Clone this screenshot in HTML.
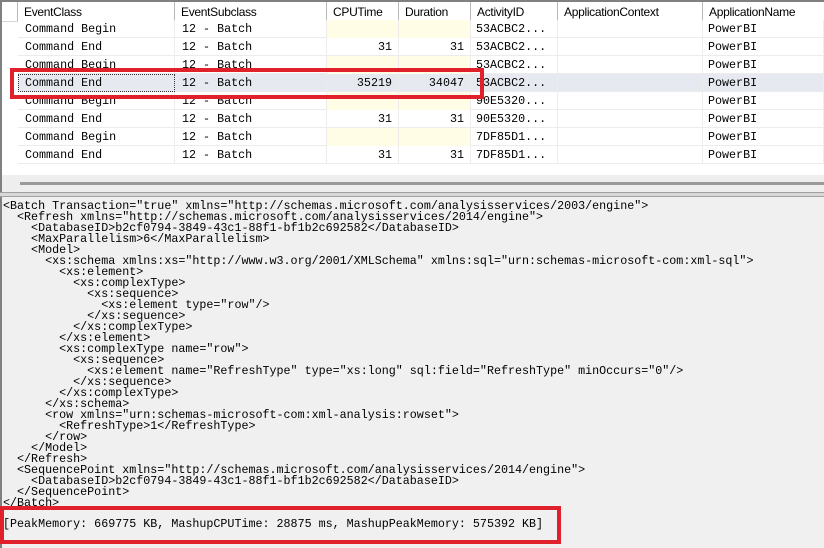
<!DOCTYPE html>
<html><head><style>
*{margin:0;padding:0;box-sizing:border-box}
body{width:824px;height:548px;background:#f0f0f0;position:relative;overflow:hidden;font-family:"Liberation Mono",monospace;font-size:11.7px;color:#000}
.abs{position:absolute}
.hc{position:absolute;top:2px;height:19px;border-right:1px solid #b8b8b8;font-family:"Liberation Sans",sans-serif;font-size:12px;padding:3px 0 0 6px;background:#fff;letter-spacing:-0.3px}
.row{position:absolute;left:18px;width:806px;height:18px;border-bottom:1px solid #ececec;background:#fff}
.c{position:absolute;top:0;height:18px;line-height:19px;border-right:1px solid #ececec;white-space:pre}
.y{background:#fffde6}
.r{text-align:right;padding-right:6px}
pre{font-family:"Liberation Mono",monospace;font-size:11.7px;line-height:11px;white-space:pre}
</style></head><body>
<div class="abs" style="left:0;top:0;width:824px;height:195px;background:#fff;border-left:2px solid #808080;border-top:2px solid #808080"></div>
<div class="hc" style="left:2px;width:16px;padding:0"></div>
<div class="hc" style="left:18px;width:157px">EventClass</div>
<div class="hc" style="left:175px;width:152px">EventSubclass</div>
<div class="hc" style="left:327px;width:72px">CPUTime</div>
<div class="hc" style="left:399px;width:72px">Duration</div>
<div class="hc" style="left:471px;width:87px">ActivityID</div>
<div class="hc" style="left:558px;width:145px">ApplicationContext</div>
<div class="hc" style="left:703px;width:121px;border-right:none">ApplicationName</div>
<div class="abs" style="left:2px;top:21px;width:822px;height:1px;background:#d5d5d5"></div>

<div class="row" style="top:20px"><div class="c" style="left:0;width:157px;padding-left:7px">Command Begin</div><div class="c" style="left:157px;width:152px;padding-left:7px">12 - Batch</div><div class="c y" style="left:309px;width:72px"></div><div class="c y" style="left:381px;width:72px"></div><div class="c" style="left:453px;width:87px;padding-left:5px">53ACBC2...</div><div class="c" style="left:540px;width:145px"></div><div class="c" style="left:685px;width:121px;padding-left:5px">PowerBI</div></div>
<div class="row" style="top:38px"><div class="c" style="left:0;width:157px;padding-left:7px">Command End</div><div class="c" style="left:157px;width:152px;padding-left:7px">12 - Batch</div><div class="c r" style="left:309px;width:72px">31</div><div class="c r" style="left:381px;width:72px">31</div><div class="c" style="left:453px;width:87px;padding-left:5px">53ACBC2...</div><div class="c" style="left:540px;width:145px"></div><div class="c" style="left:685px;width:121px;padding-left:5px">PowerBI</div></div>
<div class="row" style="top:56px"><div class="c" style="left:0;width:157px;padding-left:7px">Command Begin</div><div class="c" style="left:157px;width:152px;padding-left:7px">12 - Batch</div><div class="c y" style="left:309px;width:72px"></div><div class="c y" style="left:381px;width:72px"></div><div class="c" style="left:453px;width:87px;padding-left:5px">53ACBC2...</div><div class="c" style="left:540px;width:145px"></div><div class="c" style="left:685px;width:121px;padding-left:5px">PowerBI</div></div>
<div class="row" style="top:74px;background:#e6eaf0"><div class="c" style="left:0;width:157px;padding-left:6px;border:1px dotted #333;line-height:17px">Command End</div><div class="c" style="left:157px;width:152px;padding-left:7px">12 - Batch</div><div class="c r" style="left:309px;width:72px">35219</div><div class="c r" style="left:381px;width:72px">34047</div><div class="c" style="left:453px;width:87px;padding-left:5px">53ACBC2...</div><div class="c" style="left:540px;width:145px"></div><div class="c" style="left:685px;width:121px;padding-left:5px">PowerBI</div></div>
<div class="row" style="top:92px"><div class="c" style="left:0;width:157px;padding-left:7px">Command Begin</div><div class="c" style="left:157px;width:152px;padding-left:7px">12 - Batch</div><div class="c y" style="left:309px;width:72px"></div><div class="c y" style="left:381px;width:72px"></div><div class="c" style="left:453px;width:87px;padding-left:5px">90E5320...</div><div class="c" style="left:540px;width:145px"></div><div class="c" style="left:685px;width:121px;padding-left:5px">PowerBI</div></div>
<div class="row" style="top:110px"><div class="c" style="left:0;width:157px;padding-left:7px">Command End</div><div class="c" style="left:157px;width:152px;padding-left:7px">12 - Batch</div><div class="c r" style="left:309px;width:72px">31</div><div class="c r" style="left:381px;width:72px">31</div><div class="c" style="left:453px;width:87px;padding-left:5px">90E5320...</div><div class="c" style="left:540px;width:145px"></div><div class="c" style="left:685px;width:121px;padding-left:5px">PowerBI</div></div>
<div class="row" style="top:128px"><div class="c" style="left:0;width:157px;padding-left:7px">Command Begin</div><div class="c" style="left:157px;width:152px;padding-left:7px">12 - Batch</div><div class="c y" style="left:309px;width:72px"></div><div class="c y" style="left:381px;width:72px"></div><div class="c" style="left:453px;width:87px;padding-left:5px">7DF85D1...</div><div class="c" style="left:540px;width:145px"></div><div class="c" style="left:685px;width:121px;padding-left:5px">PowerBI</div></div>
<div class="row" style="top:146px"><div class="c" style="left:0;width:157px;padding-left:7px">Command End</div><div class="c" style="left:157px;width:152px;padding-left:7px">12 - Batch</div><div class="c r" style="left:309px;width:72px">31</div><div class="c r" style="left:381px;width:72px">31</div><div class="c" style="left:453px;width:87px;padding-left:5px">7DF85D1...</div><div class="c" style="left:540px;width:145px"></div><div class="c" style="left:685px;width:121px;padding-left:5px">PowerBI</div></div>

<div class="abs" style="left:2px;top:175px;width:822px;height:17px;background:#eeeeee"></div>
<div class="abs" style="left:20px;top:182px;width:804px;height:3px;background:#9a9a9a"></div>
<div class="abs" style="left:0;top:192px;width:824px;height:5px;background:#d8d8d8;border-top:1px solid #a0a0a0;border-bottom:1px solid #a0a0a0"></div>
<div class="abs" style="left:0;top:197px;width:824px;height:351px;background:#f0f0f0;border-left:2px solid #808080"></div>

<pre class="abs" style="left:3px;top:201px">&lt;Batch Transaction="true" xmlns="http://schemas.microsoft.com/analysisservices/2003/engine"&gt;
  &lt;Refresh xmlns="http://schemas.microsoft.com/analysisservices/2014/engine"&gt;
    &lt;DatabaseID&gt;b2cf0794-3849-43c1-88f1-bf1b2c692582&lt;/DatabaseID&gt;
    &lt;MaxParallelism&gt;6&lt;/MaxParallelism&gt;
    &lt;Model&gt;
      &lt;xs:schema xmlns:xs="http://www.w3.org/2001/XMLSchema" xmlns:sql="urn:schemas-microsoft-com:xml-sql"&gt;
        &lt;xs:element&gt;
          &lt;xs:complexType&gt;
            &lt;xs:sequence&gt;
              &lt;xs:element type="row"/&gt;
            &lt;/xs:sequence&gt;
          &lt;/xs:complexType&gt;
        &lt;/xs:element&gt;
        &lt;xs:complexType name="row"&gt;
          &lt;xs:sequence&gt;
            &lt;xs:element name="RefreshType" type="xs:long" sql:field="RefreshType" minOccurs="0"/&gt;
          &lt;/xs:sequence&gt;
        &lt;/xs:complexType&gt;
      &lt;/xs:schema&gt;
      &lt;row xmlns="urn:schemas-microsoft-com:xml-analysis:rowset"&gt;
        &lt;RefreshType&gt;1&lt;/RefreshType&gt;
      &lt;/row&gt;
    &lt;/Model&gt;
  &lt;/Refresh&gt;
  &lt;SequencePoint xmlns="http://schemas.microsoft.com/analysisservices/2014/engine"&gt;
    &lt;DatabaseID&gt;b2cf0794-3849-43c1-88f1-bf1b2c692582&lt;/DatabaseID&gt;
  &lt;/SequencePoint&gt;
&lt;/Batch&gt;</pre>
<pre class="abs" style="left:3px;top:519px">[PeakMemory: 669775 KB, MashupCPUTime: 28875 ms, MashupPeakMemory: 575392 KB]</pre>

<div class="abs" style="left:10px;top:68px;width:474px;height:31px;border:4px solid #e0202a"></div>
<div class="abs" style="left:0;top:506px;width:561px;height:38px;border:4px solid #e0202a"></div>
</body></html>
